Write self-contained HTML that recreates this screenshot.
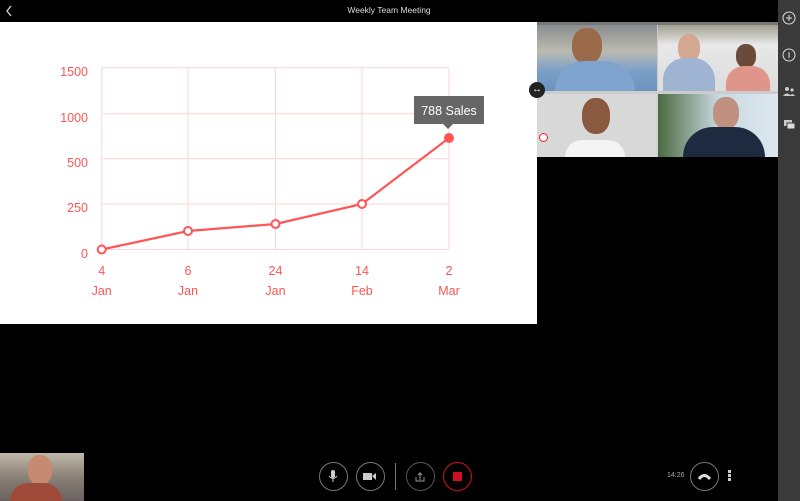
<!DOCTYPE html>
<html><head><style>
body{margin:0;width:800px;height:501px;background:#000;position:relative;overflow:hidden;font-family:"Liberation Sans",sans-serif}
.abs{position:absolute}
.btn{position:absolute;width:27px;height:27px;border:1px solid #777;border-radius:50%;top:462px}
</style></head><body>
<div class="abs" style="left:0;top:0;width:778px;height:22px;background:#000"></div>
<div class="abs" style="left:0;top:5px;width:778px;text-align:center;color:#ddd;font-size:8.5px">Weekly Team Meeting</div>
<svg class="abs" style="left:4px;top:4px" width="10" height="14"><path d="M7 2 L3 7 L7 12" stroke="#ccc" stroke-width="1.4" fill="none"/></svg>
<div class="abs" style="left:778px;top:0;width:22px;height:501px;background:#3a3a3a"></div>
<svg class="abs" style="left:778px;top:0" width="22" height="140">
<circle cx="11" cy="18" r="6" stroke="#ddd" fill="none"/><path d="M11 15v6M8 18h6" stroke="#ddd"/>
<circle cx="11" cy="55" r="6" stroke="#ddd" fill="none"/><path d="M11 52v6" stroke="#ddd"/>
<circle cx="9" cy="89" r="2" fill="#ccc"/><path d="M5 96q4-5 8 0z" fill="#ccc"/><circle cx="14" cy="90" r="1.6" fill="#ccc"/><path d="M12 96q2-4 5 0z" fill="#ccc"/>
<rect x="6" y="120" width="8" height="6" fill="#ccc"/><rect x="9" y="123" width="8" height="6" fill="#ddd" stroke="#3a3a3a"/>
</svg>
<div class="abs" style="left:0;top:22px;width:537px;height:302px;background:#fff"></div>
<svg class="abs" style="left:0;top:22px" width="537" height="302" font-family="Liberation Sans" font-size="12.5" fill="#f55">
<g stroke="#fcd6d6" stroke-width="1">
<path d="M101.7 45.7H449M101.7 91.7H449M101.7 136.7H449M101.7 182H449M101.7 227.5H449"/>
<path d="M101.7 45.7V227.5M188 45.7V227.5M275.5 45.7V227.5M362 45.7V227.5M449 45.7V227.5"/>
</g>
<g text-anchor="end"><text x="88" y="54">1500</text><text x="88" y="100">1000</text><text x="88" y="145">500</text><text x="88" y="190">250</text><text x="88" y="236">0</text></g>
<g text-anchor="middle"><text x="101.7" y="253">4</text><text x="188" y="253">6</text><text x="275.5" y="253">24</text><text x="362" y="253">14</text><text x="449" y="253">2</text>
<text x="101.7" y="273">Jan</text><text x="188" y="273">Jan</text><text x="275.5" y="273">Jan</text><text x="362" y="273">Feb</text><text x="449" y="273">Mar</text></g>
<path d="M101.7 227.5L188 209L275.5 202L362 182L449 116" stroke="#f55" stroke-width="2.2" fill="none"/>
<g fill="#fff" stroke="#f55" stroke-width="2"><circle cx="101.7" cy="227.5" r="4"/><circle cx="188" cy="209" r="4"/><circle cx="275.5" cy="202" r="4"/><circle cx="362" cy="182" r="4"/></g>
<circle cx="449" cy="116" r="5" fill="#f55"/>
<rect x="414" y="74" width="70" height="28" fill="#666"/><path d="M443 102h10l-5 5z" fill="#666"/>
<text x="449" y="93" fill="#fff" text-anchor="middle" font-size="12.5">788 Sales</text>
</svg>
<div class="abs" style="left:537px;top:22px;width:241px;height:135px;background:#ccc"></div>
<div class="abs" style="left:537px;top:22px;width:241px;height:3px;background:#777"></div>
<div class="abs" style="left:537px;top:25px;width:120px;height:66px;background:linear-gradient(180deg,#8a8e90 0%,#bcbab0 40%,#7aa0c8 70%,#6c93bd 100%)"></div>
<div class="abs" style="left:572px;top:28px;width:30px;height:36px;border-radius:45%;background:#9a6a4a"></div>
<div class="abs" style="left:555px;top:61px;width:80px;height:30px;border-radius:30px 30px 0 0;background:#7ea4cf"></div>
<div class="abs" style="left:658px;top:25px;width:120px;height:66px;background:linear-gradient(180deg,#a0a090 0%,#e8e8e8 30%,#dcdcdc 100%)"></div>
<div class="abs" style="left:678px;top:34px;width:22px;height:28px;border-radius:45%;background:#d3a890"></div>
<div class="abs" style="left:663px;top:58px;width:52px;height:33px;border-radius:22px 22px 0 0;background:#9fb3d3"></div>
<div class="abs" style="left:736px;top:44px;width:20px;height:24px;border-radius:45%;background:#6a4a38"></div>
<div class="abs" style="left:726px;top:66px;width:44px;height:25px;border-radius:18px 18px 0 0;background:#e0958a"></div>
<div class="abs" style="left:537px;top:94px;width:120px;height:63px;background:#d8d8d8"></div>
<div class="abs" style="left:582px;top:98px;width:28px;height:36px;border-radius:45%;background:#8a5a40"></div>
<div class="abs" style="left:565px;top:140px;width:60px;height:17px;border-radius:20px 20px 0 0;background:#f4f4f4"></div>
<div class="abs" style="left:658px;top:94px;width:120px;height:63px;background:linear-gradient(90deg,#4a6a40 0%,#c8d8e0 50%,#dde8ee 100%)"></div>
<div class="abs" style="left:713px;top:97px;width:26px;height:32px;border-radius:45%;background:#c09080"></div>
<div class="abs" style="left:683px;top:127px;width:82px;height:30px;border-radius:30px 30px 0 0;background:#1e2a40"></div>
<div class="abs" style="left:529px;top:82px;width:16px;height:16px;border-radius:50%;background:#222;color:#fff;font-size:10px;text-align:center;line-height:15px">↔</div>
<div class="abs" style="left:539px;top:133px;width:7px;height:7px;border-radius:50%;background:#fff;border:1px solid #e22"></div>
<div class="abs" style="left:0;top:453px;width:84px;height:48px;background:linear-gradient(180deg,#bfb8a8 0%,#8a8076 50%,#6a6060 100%)"></div>
<div class="abs" style="left:28px;top:455px;width:24px;height:30px;border-radius:45%;background:#c58a70"></div>
<div class="abs" style="left:10px;top:483px;width:52px;height:18px;border-radius:18px 18px 0 0;background:#a04a3a"></div>
<div class="btn" style="left:319px"></div>
<div class="btn" style="left:356px"></div>
<div class="abs" style="left:395px;top:463px;width:1px;height:27px;background:#777"></div>
<div class="btn" style="left:406px;border-color:#555"></div>
<div class="btn" style="left:443px;border-color:#d01020"></div>
<div class="abs" style="left:453px;top:472px;width:9px;height:9px;background:#d01020"></div>
<svg class="abs" style="left:319px;top:462px" width="180" height="29">
<rect x="12" y="8" width="4" height="8" rx="2" fill="#ccc"/><path d="M10 14q4 5 8 0M14 17v3" stroke="#ccc" fill="none"/>
<rect x="44" y="11" width="9" height="7" fill="#ccc"/><path d="M53 14l4-3v7z" fill="#ccc"/>
<path d="M101 18v-7l-2 2M101 11l2 2M97 15v4h8v-4" stroke="#999" fill="none"/>
</svg>
<div class="abs" style="left:667px;top:472px;color:#aaa;font-size:7px">14:26</div>
<div class="btn" style="left:690px"></div>
<svg class="abs" style="left:690px;top:462px" width="29" height="29"><path d="M9 17q5-7 11 0" stroke="#ddd" stroke-width="3" fill="none"/></svg>
<div class="abs" style="left:728px;top:470px;width:3px;height:3px;background:#ccc;box-shadow:0 4px #ccc,0 8px #ccc"></div>
</body></html>
